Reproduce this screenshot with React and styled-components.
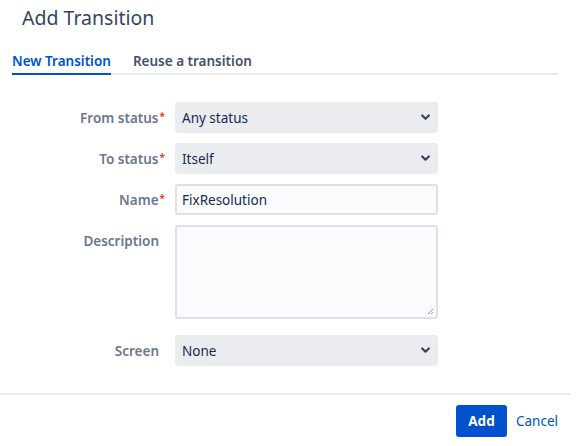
import React from 'react'
import styled, {createGlobalStyle} from 'styled-components'

const GlobalStyle = createGlobalStyle`
  html, body {
    margin: 0;
    padding: 0;
    background: #fff;
  }
  body {
    font-family: "Noto Sans", "Open Sans", sans-serif;
    color: #172b4d;
  }
`

const Dialog = styled.div`
  width: 577px;
  height: 446px;
  display: flex;
  flex-direction: column;
  box-sizing: border-box;
`

const Title = styled.h1`
  margin: 0;
  padding: 5px 0 0 22px;
  font-size: 19.5px;
  line-height: 26px;
  font-weight: 400;
  color: #344563;
`

const Tabs = styled.div`
  display: flex;
  gap: 22px;
  margin: 20px 19px 0 12px;
  border-bottom: 2px solid #ebecf0;
`

const Tab = styled.div`
  font-size: 13.5px;
  line-height: 20px;
  font-weight: 600;
  padding-bottom: 2px;
  margin-bottom: -2px;
  color: ${p => (p.$active ? '#0052cc' : '#42526e')};
  border-bottom: 2px solid ${p => (p.$active ? '#0052cc' : 'transparent')};
`

const Form = styled.div`
  display: grid;
  grid-template-columns: 165px 263px;
  column-gap: 10px;
  row-gap: 10px;
  padding-top: 27px;
  align-items: start;
`

const Label = styled.label`
  justify-self: end;
  display: flex;
  align-items: center;
  height: 31px;
  padding-right: ${p => (p.$required ? 0 : 6)}px;
  font-size: 13.5px;
  font-weight: 600;
  color: #6b778c;
  margin-top: ${p => p.$top || 0}px;
`

const Required = styled.span`
  color: #de350b;
  font-size: 10px;
  align-self: flex-start;
  margin-top: 7px;
  margin-left: 1px;
`

const SelectBox = styled.div`
  position: relative;
  height: 31px;
  border-radius: 3px;
  background: #ebecf0;
  display: flex;
  align-items: center;
  padding: 0 7px;
  font-size: 13.5px;
  color: #172b4d;
  margin-top: ${p => p.$top || 0}px;
`

const Chevron = styled.svg`
  position: absolute;
  right: 8px;
  top: 12px;
`

const TextInput = styled.div`
  height: 31px;
  box-sizing: border-box;
  border: 2px solid #dfe1e6;
  border-radius: 3px;
  background: #fafbfc;
  display: flex;
  align-items: center;
  padding: 0 5px;
  font-size: 13.5px;
  color: #172b4d;
`

const TextArea = styled.div`
  position: relative;
  height: 94px;
  box-sizing: border-box;
  border: 2px solid #dfe1e6;
  border-radius: 3px;
  background: #fafbfc;
`

const Grip = styled.svg`
  position: absolute;
  right: 2px;
  bottom: 2px;
`

const Footer = styled.div`
  margin-top: auto;
  margin-right: 7px;
  border-top: 2px solid #ebecf0;
  display: flex;
  justify-content: flex-end;
  align-items: center;
  gap: 9px;
  padding: 10px 12px 9px 0;
`

const PrimaryButton = styled.button`
  height: 32px;
  width: 51px;
  border: none;
  border-radius: 3px;
  background: #0052cc;
  color: #fff;
  font-family: inherit;
  font-size: 13.5px;
  font-weight: 700;
`

const LinkButton = styled.button`
  border: none;
  background: none;
  padding: 0;
  font-family: inherit;
  font-size: 13.5px;
  color: #0052cc;
`

const ChevronIcon = () => (
  <Chevron width="9" height="7" viewBox="0 0 9 7">
    <path d="M1.2 1.5 L4.5 4.8 L7.8 1.5" fill="none" stroke="#344563" strokeWidth="2.2" strokeLinecap="round" strokeLinejoin="round" />
  </Chevron>
)

const Select = ({value, top}) => (
  <SelectBox $top={top}>
    {value}
    <ChevronIcon />
  </SelectBox>
)

const App = () => (
  <Dialog>
    <GlobalStyle />
    <Title>Add Transition</Title>
    <Tabs>
      <Tab $active>New Transition</Tab>
      <Tab>Reuse a transition</Tab>
    </Tabs>
    <Form>
      <Label $required>From status<Required>*</Required></Label>
      <Select value="Any status" />

      <Label $required>To status<Required>*</Required></Label>
      <Select value="Itself" />

      <Label $required>Name<Required>*</Required></Label>
      <TextInput>FixResolution</TextInput>

      <Label>Description</Label>
      <TextArea>
        <Grip width="8" height="8" viewBox="0 0 8 8">
          <path d="M7 2 L2 7 M7 5 L5 7" stroke="#8993a4" strokeWidth="0.9" />
        </Grip>
      </TextArea>

      <Label $top={6}>Screen</Label>
      <Select value="None" top={6} />
    </Form>
    <Footer>
      <PrimaryButton>Add</PrimaryButton>
      <LinkButton>Cancel</LinkButton>
    </Footer>
  </Dialog>
)

export default App
